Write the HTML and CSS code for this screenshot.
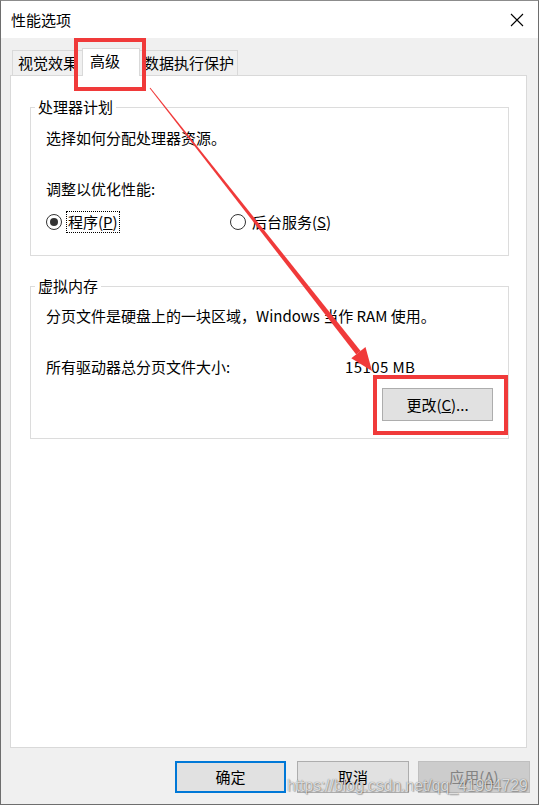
FILE: index.html
```html
<!DOCTYPE html>
<html lang="zh-CN">
<head>
<meta charset="utf-8">
<title>性能选项</title>
<link rel="stylesheet" href="styles.css">
</head>
<body>
<div class="window">
  <div class="titlebar">
    <span class="title">性能选项</span>
    <svg class="close" width="14" height="14" viewBox="0 0 14 14"><path d="M1 1 L13 13 M13 1 L1 13" stroke="#000" stroke-width="1.1" fill="none"/></svg>
  </div>
  <div class="content">
    <div class="tabs">
      <div class="tab tab1">视觉效果</div>
      <div class="tab active">高级</div>
      <div class="tab tab3">数据执行保护</div>
    </div>
    <div class="panel">
      <fieldset class="group g1">
        <legend>处理器计划</legend>
        <p class="line first">选择如何分配处理器资源。</p>
        <p class="line second">调整以优化性能:</p>
        <div class="radios">
          <div class="radio-item item1">
            <span class="radio checked"></span>
            <span class="rlabel focus">程序(<u>P</u>)</span>
          </div>
          <div class="radio-item">
            <span class="radio"></span>
            <span class="rlabel">后台服务(<u>S</u>)</span>
          </div>
        </div>
      </fieldset>
      <fieldset class="group g2">
        <legend>虚拟内存</legend>
        <p class="line first2">分页文件是硬盘上的一块区域，Windows 当作 RAM 使用。</p>
        <div class="line size-row">
          <span class="size-label">所有驱动器总分页文件大小:</span>
          <span class="size-value">15105 MB</span>
        </div>
        <div class="btn-row">
          <button class="btn change">更改(<u>C</u>)...</button>
        </div>
      </fieldset>
    </div>
    <div class="footer">
      <button class="btn ok">确定</button>
      <button class="btn cancel">取消</button>
      <button class="btn apply">应用(<u>A</u>)</button>
    </div>
  </div>

  <div class="mark mark1"></div>
  <div class="mark mark2"></div>
  <svg class="arrow" width="539" height="805" viewBox="0 0 539 805">
    <polygon fill="#f03a3a" points="150.4,87.7 360.6,351.0 356.2,354.4 149.6,88.3"/>
    <polygon fill="#f03a3a" points="372,371 365.5,347.1 351.3,358.3"/>
  </svg>
  <div class="watermark">https://blog.csdn.net/qq_41904729</div>
</div>
</body>
</html>
```
FILE: styles.css
```css
* { box-sizing: border-box; }
html, body { margin: 0; padding: 0; background: #ffffff; }
body {
  font-family: "Noto Sans CJK SC", "Noto Sans", sans-serif;
  font-size: 15px;
  color: #000;
}
.window {
  position: relative;
  width: 539px;
  height: 805px;
  border: 1px solid #6e6e6e;
  border-top-color: #8c8c8c;
  background: #f0f0f0;
  overflow: hidden;
}
.titlebar {
  height: 37px;
  background: #ffffff;
  display: flex;
  align-items: center;
  justify-content: space-between;
  padding: 0 14px 0 10px;
}
.title { line-height: 20px; }
.close { display: block; }

.content { padding: 10px 8px 0 9px; }

.tabs {
  display: flex;
  align-items: flex-end;
  height: 27px;
  padding-left: 2px;
}
.tab {
  height: 25px;
  line-height: 23px;
  border: 1px solid #d9d9d9;
  border-bottom: none;
  background: #f0f0f0;
  white-space: nowrap;
  overflow: hidden;
}
.tab1 { width: 72px; padding-left: 5px; }
.tab3 { width: 100px; padding-left: 5px; margin-left: -2px; }
.tab.active {
  position: relative;
  z-index: 2;
  width: 58px;
  height: 28px;
  margin-left: -2px;
  margin-bottom: -1px;
  padding-left: 7px;
  line-height: 24px;
  background: #ffffff;
}

.panel {
  height: 673px;
  margin-right: 3px;
  background: #ffffff;
  border: 1px solid #d9d9d9;
  padding-top: 21px;
}

.group {
  margin: 0 17px 0 19px;
  padding: 0 15px 22px 15px;
  border: 1px solid #dcdcdc;
  min-width: 0;
}
.group legend {
  margin-left: -11px;
  padding: 0 3px;
  line-height: 20px;
}
.g2 { margin-top: 20px; padding-bottom: 17px; }

.line { margin: 0; line-height: 20px; white-space: nowrap; }
.first { margin-top: 11px; }
.second { margin-top: 31px; }
.first2 { margin-top: 10px; }

.radios {
  display: flex;
  margin-top: 12px;
  height: 22px;
  align-items: center;
}
.radio-item { display: flex; align-items: center; }
.item1 { width: 184px; }
.radio {
  width: 16px;
  height: 16px;
  border: 1px solid #333;
  border-radius: 50%;
  display: flex;
  align-items: center;
  justify-content: center;
  background: #fff;
}
.radio.checked::after {
  content: "";
  width: 8px;
  height: 8px;
  border-radius: 50%;
  background: #333;
}
.rlabel {
  margin-left: 4px;
  line-height: 20px;
  padding: 0 1px;
  border: 1px dotted transparent;
}
.rlabel.focus { border-color: #000; }

.size-row { display: flex; margin-top: 31px; }
.size-label { width: 299px; }
.size-value { letter-spacing: 0.4px; }

.btn-row { display: flex; justify-content: flex-end; margin-top: 11px; }

.btn {
  font-family: "Noto Sans CJK SC", "Noto Sans", sans-serif;
  font-size: 15px;
  color: #000;
  background: #e1e1e1;
  border: 1px solid #adadad;
  padding: 0;
  margin: 0;
  line-height: 20px;
  display: flex;
  align-items: center;
  justify-content: center;
}
.btn u { text-decoration: underline; }
.change { width: 111px; height: 33px; }

.footer {
  display: flex;
  justify-content: flex-end;
  margin-top: 13px;
}
.footer .btn { height: 32px; }
.ok { width: 111px; border: 2px solid #0078d7; }
.cancel { width: 112px; margin-left: 11px; }
.apply {
  width: 112px;
  margin-left: 9px;
  background: #cccccc;
  border-color: #bfbfbf;
  color: #838383;
}

.mark {
  position: absolute;
  border: 4px solid #f03a3a;
  z-index: 5;
}
.mark1 { left: 73px; top: 37px; width: 72px; height: 53px; }
.mark2 { left: 372px; top: 374px; width: 135px; height: 60px; }

.arrow { position: absolute; left: -1px; top: -1px; z-index: 6; }

.watermark {
  position: absolute;
  left: 286px;
  top: 775px;
  z-index: 7;
  font-family: "Liberation Sans", Arial, sans-serif;
  font-size: 15.7px;
  line-height: 20px;
  color: rgba(255, 255, 255, 0.75);
  text-shadow: 0 0 1px rgba(0, 0, 0, 0.55), 1px 1px 1px rgba(0, 0, 0, 0.25);
  white-space: nowrap;
}
```
